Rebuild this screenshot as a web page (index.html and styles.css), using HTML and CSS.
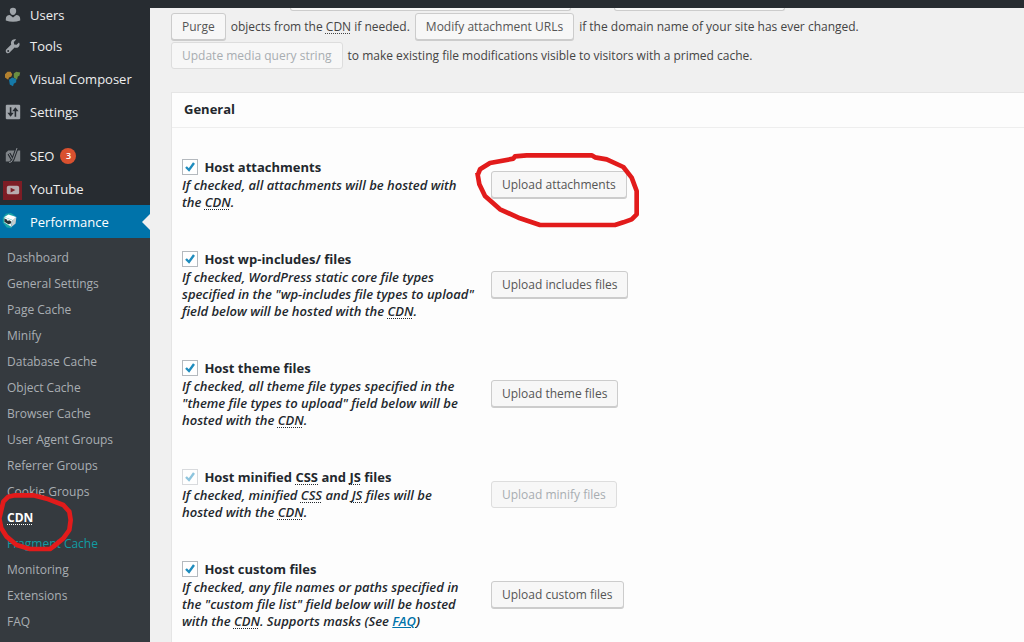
FILE: index.html
```
<!DOCTYPE html>
<html lang="en">

<head>
    <meta charset="utf-8">
    <title>Performance - CDN</title>
    <link rel="stylesheet" href="styles.css">
</head>

<body>
    <nav class="admin-menu">
        <ul class="menu">
            <li><a href="#">
                <svg class="icon" viewBox="0 0 20 20"><path d="M10 1a4 4 0 0 1 4 4c0 2.500-1.700 5-4 5S6 7.500 6 5a4 4 0 0 1 4-4zM6 10l4 3 4-3c3 0 5 2 5 5v2q-9 3-18 0v-2c0-3 2-5 5-5z"/></svg>
                Users</a></li>
            <li><a href="#">
                <svg class="icon" viewBox="0 0 20 20"><path d="M17.500 5.500l-3 3-3-.5-.5-3 3-3C11.500 1 8 2 7.500 5.500q-.2 1.500.3 2.500L1.500 14.500c-2 2.500 1.500 6 4 4L12 12c4 1.500 8-2.500 5.500-6.500zM4 17.500a1.200 1.200 0 1 1 0-2.400 1.200 1.200 0 0 1 0 2.400z"/></svg>
                Tools</a></li>
            <li><a href="#">
                <svg class="icon" viewBox="0 0 20 20">
                    <path fill="#b3812f" d="M0 4l3-3h4l2 3-1 3-3 1-1 3-4-3z"/>
                    <path fill="#6b8f42" d="M11 3l3-2 5 1-1 4-2 1-1 4-4-3z"/>
                    <path fill="#1579a8" d="M5 11l4-3 5 2v4l-3 2-1 3-4-2z"/>
                </svg>
                Visual Composer</a></li>
            <li><a href="#">
                <svg class="icon" viewBox="0 0 20 20"><path fill-rule="evenodd" d="M2 1h16l1 1v16l-1 1H2l-1-1V2zM6 4v7H3l4 5 4-5H8V4zM13 4l-4 5h3v7h2V9h3z"/></svg>
                Settings</a></li>
            <li class="separated"><a href="#">
                <svg class="icon icon-seo" viewBox="0 0 20 20">
                    <path fill="#7f8488" d="M4 3h15v14H1V6z"/>
                    <path fill="none" stroke="#272c31" stroke-width="4" d="M5 7l4 7M15 0L10 14q-2 5-5 4"/>
                    <path fill="none" stroke="#a0a5aa" stroke-width="1" d="M5 7l4 7M15 0L10 14q-2 5-5 4"/>
                </svg>
                SEO <span class="count">3</span></a></li>
            <li><a href="#">
                <svg class="icon icon-youtube" viewBox="0 0 20 20">
                    <path fill="#7d1d25" d="M0 0h20v20H0z"/>
                    <rect x="4" y="5" width="13" height="9" rx="2" fill="#b8abae"/>
                    <path fill="#7d1d25" d="M8 7l5 2.500L8 12z"/>
                </svg>
                YouTube</a></li>
            <li class="current"><a href="#">
                <svg class="icon icon-performance" viewBox="0 0 20 20">
                    <path fill="#1aa5a8" d="M1 6l4-5 6-1 5 3-5 12 1 4-6-1-5-6z"/>
                    <path fill="#fff" d="M3 5l5-3 10 3-4 4z"/>
                    <path fill="#f4f6f6" d="M3 5l10 4-2 8-8-5z"/>
                    <path fill="#c6cccd" d="M13 9l5-4-1 8-6 5z"/>
                    <path fill="#253235" d="M3 7l3 1 1 2 2-1 3 2-1 2-3 1-5-3z"/>
                </svg>
                Performance</a>
                <ul class="submenu">
                    <li><a href="#">Dashboard</a></li>
                    <li><a href="#">General Settings</a></li>
                    <li><a href="#">Page Cache</a></li>
                    <li><a href="#">Minify</a></li>
                    <li><a href="#">Database Cache</a></li>
                    <li><a href="#">Object Cache</a></li>
                    <li><a href="#">Browser Cache</a></li>
                    <li><a href="#">User Agent Groups</a></li>
                    <li><a href="#">Referrer Groups</a></li>
                    <li><a href="#">Cookie Groups</a></li>
                    <li class="active"><a href="#"><abbr>CDN</abbr></a>
                        <svg class="mark mark-cdn" viewBox="0 0 240 270"><path d="M4 120L10 95 25 80 45 76H100L140 86 190 105 208 125 212 150 208 180 190 205 160 230 150 237H90L50 225 20 200 4 175-2 145z"/></svg>
                    </li>
                    <li class="highlight"><a href="#">Fragment Cache</a></li>
                    <li><a href="#">Monitoring</a></li>
                    <li><a href="#">Extensions</a></li>
                    <li><a href="#">FAQ</a></li>
                </ul>
            </li>
        </ul>
    </nav>

    <main class="content">
        <div class="admin-bar"></div>
        <div class="clipped-row">
            <span class="clipped-button"></span>
            <span class="clipped-button small"></span>
        </div>

        <div class="actions">
            <div class="action-line">
                <button class="button" type="button">Purge</button>
                <span>objects from the <abbr>CDN</abbr> if needed.</span>
                <button class="button" type="button">Modify attachment URLs</button>
                <span>if the domain name of your site has ever changed.</span>
            </div>
            <div class="action-line">
                <button class="button" type="button" disabled>Update media query string</button>
                <span>to make existing file modifications visible to visitors with a primed cache.</span>
            </div>
        </div>

        <section class="postbox">
            <h3>General</h3>
            <table class="form-table">
                <tr>
                    <th scope="row">
                        <label><input type="checkbox" checked> Host attachments</label>
                        <p>If checked, all attachments will be hosted with the <abbr>CDN</abbr>.</p>
                    </th>
                    <td>
                        <div class="marked">
                            <button class="button" type="button">Upload attachments</button>
                            <svg class="mark mark-upload" viewBox="0 0 600 510"><path d="M52 105L60 85 90 66 160 53 165 46 200 43H395L405 49 440 55 490 78 515 110 530 150V220L515 235 490 244 465 252H240L180 232 120 205 75 165 58 130 52 95"/></svg>
                        </div>
                    </td>
                </tr>
                <tr>
                    <th scope="row">
                        <label><input type="checkbox" checked> Host wp-includes/ files</label>
                        <p>If checked, WordPress static core file types specified in the "wp-includes file types to upload" field below will be hosted with the <abbr>CDN</abbr>.</p>
                    </th>
                    <td><button class="button" type="button">Upload includes files</button></td>
                </tr>
                <tr>
                    <th scope="row">
                        <label><input type="checkbox" checked> Host theme files</label>
                        <p>If checked, all theme file types specified in the "theme file types to upload" field below will be hosted with the <abbr>CDN</abbr>.</p>
                    </th>
                    <td><button class="button" type="button">Upload theme files</button></td>
                </tr>
                <tr>
                    <th scope="row">
                        <label><input type="checkbox" checked disabled> Host minified <abbr>CSS</abbr> and <abbr>JS</abbr> files</label>
                        <p>If checked, minified <abbr>CSS</abbr> and <abbr>JS</abbr> files will be hosted with the <abbr>CDN</abbr>.</p>
                    </th>
                    <td><button class="button" type="button" disabled>Upload minify files</button></td>
                </tr>
                <tr>
                    <th scope="row">
                        <label><input type="checkbox" checked> Host custom files</label>
                        <p>If checked, any file names or paths specified in the "custom file list" field below will be hosted with the <abbr>CDN</abbr>. Supports masks (See <a href="#">FAQ</a>)</p>
                    </th>
                    <td><button class="button" type="button">Upload custom files</button></td>
                </tr>
            </table>
        </section>
    </main>
</body>

</html>
```
FILE: styles.css
```
* {
    box-sizing: border-box;
}

body {
    display: flex;
    height: 100vh;
    margin: 0;
    overflow: hidden;
    background: #f0f0f0;
    color: #444;
    font-family: "Open Sans", "Noto Sans", sans-serif;
    font-size: 12px;
}

ul {
    margin: 0;
    padding: 0;
    list-style: none;
}

abbr {
    text-decoration: underline dotted 1px;
    text-underline-offset: 2px;
    text-decoration-skip-ink: none;
}

.admin-menu {
    flex: 0 0 150px;
    background: #272c31;
}

.menu > li > a {
    display: flex;
    align-items: center;
    gap: 8px;
    height: 33px;
    padding-left: 5px;
    color: #eee;
    font-size: 13px;
    text-decoration: none;
    white-space: nowrap;
}

.menu > li:first-child > a {
    height: 29px;
}

.menu > .separated {
    margin-top: 11px;
}

.icon {
    flex: none;
    width: 16px;
    height: 16px;
    margin-right: 1px;
    fill: #a0a5aa;
}

.icon-seo {
    height: 18px;
}

.icon-youtube {
    width: 19px;
    height: 19px;
    margin: 3px 0 0 -2px;
}

.icon-performance {
    margin: 0 4px 2px -3px;
}

.count {
    width: 16px;
    height: 16px;
    margin-left: -2px;
    border-radius: 8px;
    background: #d9512f;
    color: #fff;
    font-size: 9px;
    font-weight: 600;
    line-height: 16px;
    text-align: center;
}

.menu > .current > a {
    position: relative;
    background: #0073aa;
    color: #fff;
}

.menu > .current > a::after {
    content: "";
    position: absolute;
    top: 9px;
    right: 0;
    border: 8px solid transparent;
    border-left: 0;
    border-right-color: #f0f0f0;
}

.submenu {
    padding: 7px 0;
    background: #353a3f;
}

.submenu li {
    position: relative;
    height: 26px;
    padding-left: 7px;
    line-height: 26px;
}

.submenu a {
    color: #a9aeb3;
    text-decoration: none;
}

.submenu .active {
    z-index: 1;
}

.submenu .active a {
    color: #fff;
    font-weight: 700;
}

.submenu .highlight a {
    color: #109ca3;
}

.mark {
    position: absolute;
    fill: none;
    stroke: #e21b1b;
    stroke-width: 14;
    stroke-linejoin: round;
    pointer-events: none;
}

.mark-cdn {
    top: -35px;
    left: 0;
    width: 80px;
    height: 90px;
}

.mark-upload {
    top: -30px;
    left: -31px;
    width: 200px;
    height: 170px;
}

.content {
    flex: 1;
    min-width: 0;
    overflow: hidden;
}

.admin-bar {
    height: 8px;
    background: #272c31;
}

.clipped-row {
    display: flex;
    gap: 43px;
    height: 3px;
    padding-left: 140px;
}

.clipped-button {
    width: 281px;
    border: 1px solid #ccc;
    border-top: 0;
    border-radius: 0 0 3px 3px;
    background: #f7f7f7;
}

.clipped-button.small {
    width: 171px;
}

.actions {
    padding: 1px 0 0 21px;
}

.action-line {
    display: flex;
    align-items: center;
    gap: 5px;
    height: 29px;
    white-space: nowrap;
}

.button {
    height: 27px;
    padding: 0 10px;
    border: 1px solid #ccc;
    border-radius: 3px;
    background: #f7f7f7;
    box-shadow: 0 1px 0 #ccc;
    color: #555;
    font-family: inherit;
    font-size: 12px;
    white-space: nowrap;
}

.button:disabled {
    border-color: #ddd;
    box-shadow: none;
    color: #a8adb1;
}

.postbox {
    margin: 22px 0 0 21px;
    border: 1px solid #e5e5e5;
    border-right: 0;
    background: #fdfdfd;
}

.postbox h3 {
    margin: 0;
    padding: 0 12px 2px;
    border-bottom: 1px solid #eee;
    color: #23282d;
    font-size: 13px;
    font-weight: 700;
    line-height: 32px;
}

.form-table {
    width: 100%;
    margin-top: 10px;
    border-collapse: collapse;
    color: #23282d;
}

.form-table th {
    width: 319px;
    padding: 19px 16px 19px 10px;
    font-weight: 700;
    text-align: left;
    vertical-align: top;
}

.form-table td {
    padding: 0;
    vertical-align: middle;
}

.form-table label {
    display: block;
    font-size: 13px;
    line-height: 20px;
}

.form-table p {
    margin: 0;
    font-size: 13px;
    font-style: italic;
    font-weight: 600;
    line-height: 17px;
}

.form-table p a {
    color: #0073aa;
}

.form-table input {
    appearance: none;
    width: 16px;
    height: 16px;
    margin: 0 3px 0 0;
    border: 1px solid #b4b9be;
    background: #fff url("data:image/svg+xml,%3Csvg xmlns='http://www.w3.org/2000/svg' viewBox='0 0 14 14'%3E%3Cpath d='M3 7l3 3 5-7' fill='none' stroke='%231e8cbe' stroke-width='2.4'/%3E%3C/svg%3E") center / 14px 14px no-repeat;
    vertical-align: -3px;
}

.form-table input:disabled {
    opacity: 0.5;
}

.marked {
    position: relative;
}
```
